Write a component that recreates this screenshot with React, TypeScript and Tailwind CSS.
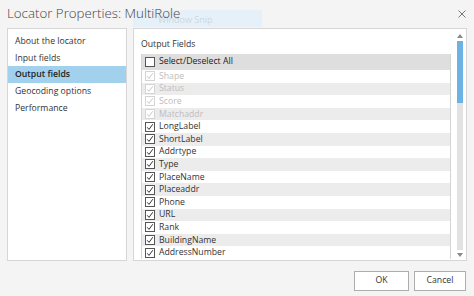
const navItems = ["About the locator", "Input fields", "Output fields", "Geocoding options", "Performance"];

const fields = [
  { name: "Shape", locked: true },
  { name: "Status", locked: true },
  { name: "Score", locked: true },
  { name: "Matchaddr", locked: true },
  { name: "LongLabel" },
  { name: "ShortLabel" },
  { name: "Addrtype" },
  { name: "Type" },
  { name: "PlaceName" },
  { name: "Placeaddr" },
  { name: "Phone" },
  { name: "URL" },
  { name: "Rank" },
  { name: "BuildingName" },
  { name: "AddressNumber" },
];

function Check({ checked, locked }: { checked: boolean; locked?: boolean }) {
  return (
    <span
      className={
        "flex h-[10px] w-[10px] shrink-0 items-center justify-center border bg-white " +
        (locked ? "border-[#d4d4d4]" : "border-[#555]")
      }
    >
      {checked && (
        <svg width="8" height="8" viewBox="0 0 8 8" aria-hidden>
          <polyline
            points="1.2,4.3 3,6.4 6.8,1.2"
            fill="none"
            stroke={locked ? "#c8c8c8" : "#333"}
            strokeWidth="1"
          />
        </svg>
      )}
    </span>
  );
}

export default function App() {
  return (
    <div
      className="relative flex h-[296px] w-[474px] flex-col overflow-hidden bg-[#f4f4f4] text-[#333]"
      style={{ fontFamily: '"Open Sans", "Noto Sans", sans-serif' }}
    >
      {/* screen-capture tooltip caught in the screenshot */}
      <div className="absolute left-[133px] top-[10px] flex h-[17px] w-[129px] items-center bg-[#e6f0f8] pl-[25px] pt-[3px] text-[9px] text-[#cdd8e0]">
        Window Snip
      </div>

      <div className="relative z-10 flex h-[28px] shrink-0 items-center justify-between pl-[7px] pr-[8px]">
        <h1 className="text-[13.3px] font-light leading-none text-[#444]">Locator Properties: MultiRole</h1>
        <svg width="8" height="8" viewBox="0 0 8 8" aria-hidden>
          <path d="M0.5 0.5L7.5 7.5M7.5 0.5L0.5 7.5" stroke="#777" strokeWidth="1" />
        </svg>
      </div>

      <div className="flex h-[233px] shrink-0 gap-[6px] px-[7px]">
        <div className="w-[120px] border border-[#d6d6d6] bg-white py-[4px]">
          {navItems.map((item) => (
            <div
              key={item}
              className={
                "flex h-[16.7px] items-center pl-[7px] text-[8.7px] " +
                (item === "Output fields" ? "bg-[#a2d1ee] font-semibold text-[#222]" : "text-[#333]")
              }
            >
              {item}
            </div>
          ))}
        </div>

        <div className="flex flex-1 border border-[#d6d6d6] bg-white">
          <div className="flex-1 pl-[7px] pr-[5px]">
            <div className="flex h-[25px] items-end pb-[3px] text-[8.7px] text-[#333]">Output Fields</div>
            <div className="border-x border-[#d4d4d4]">
              <div className="flex h-[16px] items-center gap-[4px] bg-[#dedede] pl-[3px] text-[8.7px] font-medium text-[#222]">
                <Check checked={false} />
                Select/Deselect All
              </div>
              {fields.map((f, i) => (
                <div
                  key={f.name}
                  className={
                    "flex h-[12.6px] items-center gap-[4px] pl-[3px] text-[8.7px] leading-[11px] " +
                    (i % 2 ? "bg-[#ececec] " : "bg-white ") +
                    (f.locked ? "text-[#bdbdbd]" : "text-[#333]")
                  }
                >
                  <Check checked locked={f.locked} />
                  {f.name}
                </div>
              ))}
            </div>
          </div>

          <div className="mr-[3px] flex w-[7px] flex-col items-center pb-[3px] pt-[5px]">
            <svg width="6" height="4" viewBox="0 0 6 4" aria-hidden className="mb-[3px]">
              <path d="M0 4L3 0L6 4Z" fill="#8a8a8a" />
            </svg>
            <div className="flex w-[6px] flex-1 flex-col bg-[#e2e2e2]">
              <div className="h-[62px] bg-[#6bb3e5]" />
            </div>
            <svg width="6" height="4" viewBox="0 0 6 4" aria-hidden className="mt-[3px]">
              <path d="M0 0L6 0L3 4Z" fill="#8a8a8a" />
            </svg>
          </div>
        </div>
      </div>

      <div className="flex flex-1 items-start justify-end gap-[5px] pr-[8px] pt-[10px]">
        <button className="h-[20px] w-[55px] border border-[#adadad] bg-white text-[8.7px] text-[#333]">OK</button>
        <button className="h-[20px] w-[52px] border border-[#adadad] bg-white text-[8.7px] text-[#333]">Cancel</button>
      </div>
    </div>
  );
}
